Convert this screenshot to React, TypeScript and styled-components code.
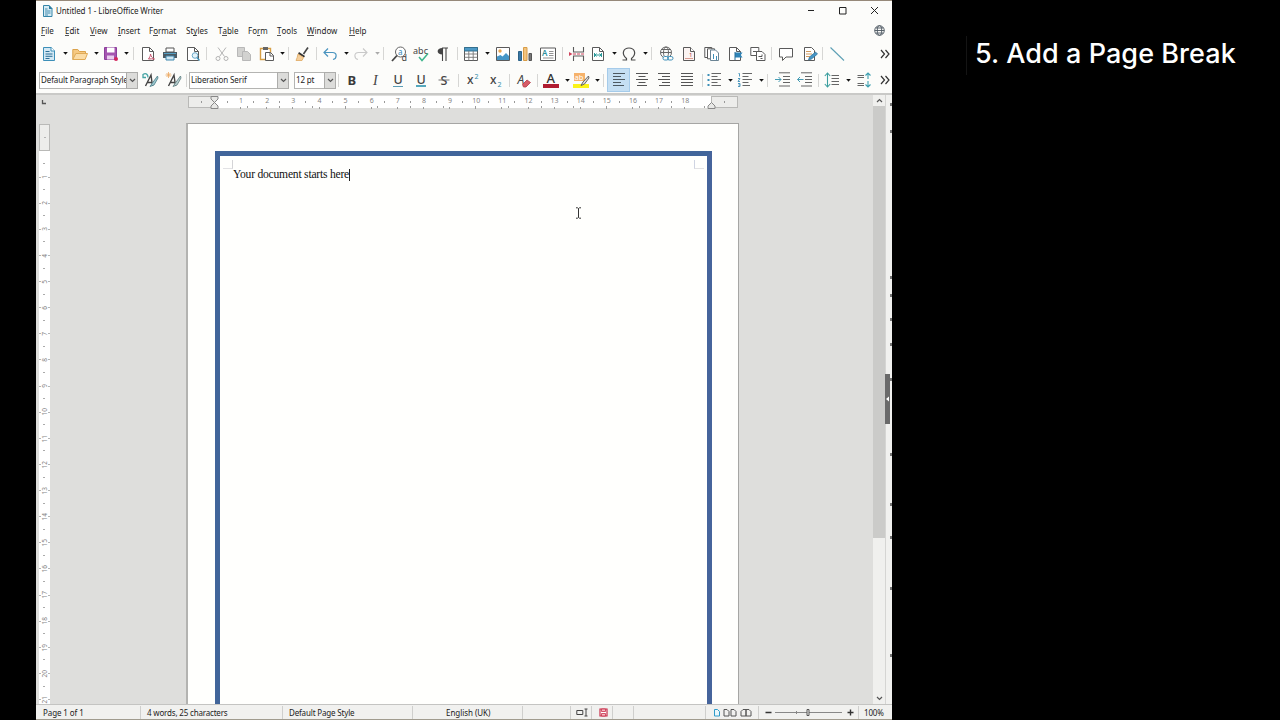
import React from "react";
import styled, { createGlobalStyle } from "styled-components";

const ui = `"Noto Sans", "Open Sans", sans-serif`;

const Global = createGlobalStyle`
  * { box-sizing: border-box; }
  body { margin: 0; background: #000; overflow: hidden; }
  svg { overflow: visible; display: block; flex: none; }
`;
const Screen = styled.div`
  display: flex;
  width: 1280px;
  height: 720px;
  background: #000;
  padding-left: 36px;
`;
const Win = styled.div`
  position: relative;
  display: flex;
  flex-direction: column;
  width: 856px;
  height: 720px;
  background: #fcfcfa;
  border-top: 1px solid #96897a;
  border-bottom: 1px solid #a09b8e;
  font-family: ${ui};
  color: #1c1c1c;
`;
const TitleBar = styled.header`
  display: flex;
  align-items: center;
  height: 19px;
  padding-left: 6px;
`;
const Label = styled.span<{ $w?: number; $ls?: number }>`
  display: block;
  flex: none;
  width: ${(p) => (p.$w ? `${p.$w}px` : "auto")};
  font-size: 8px;
  line-height: 12px;
  letter-spacing: ${(p) => p.$ls ?? -0.14}px;
  white-space: nowrap;
`;
const TitleText = styled(Label)`
  margin-left: 3px;
  flex: 1;
`;
const Controls = styled.div`
  display: flex;
  gap: 21px;
  margin-right: 12px;
`;
const MenuBar = styled.nav`
  display: flex;
  align-items: center;
  height: 21px;
  padding: 0 7px 0 5px;
`;
const MenuSpacer = styled.div`
  flex: 1;
`;
const Mnemonic = styled.span`
  border-bottom: 1px solid #555;
  display: inline-block;
  height: 10px;
  line-height: 10px;
`;
const Bar = styled.div<{ $raise?: number }>`
  display: flex;
  align-items: center;
  height: 26px;
  padding-bottom: ${(p) => p.$raise ?? 0}px;
  flex: none;
`;
const Slot = styled.div<{ $gap: number; $w: number }>`
  display: flex;
  align-items: center;
  justify-content: center;
  flex: none;
  width: ${(p) => p.$w}px;
  height: 16px;
  margin-left: ${(p) => p.$gap}px;
`;
const Active = styled(Slot)`
  height: 24px;
  background: #c5dff3;
  border: 1px solid #a5cbea;
`;
const Divider = styled.div<{ $gap: number }>`
  flex: none;
  width: 1px;
  height: 13px;
  margin-left: ${(p) => p.$gap}px;
  background: #d6d6d4;
`;
const Combo = styled.div<{ $gap: number; $w: number }>`
  display: flex;
  flex: none;
  align-items: center;
  width: ${(p) => p.$w}px;
  height: 17px;
  margin-left: ${(p) => p.$gap}px;
  border: 1px solid #b4b4b2;
  background: #fff;
  padding-left: 1px;
`;
const ComboText = styled(Label)`
  flex: 1;
  min-width: 0;
`;
const ComboButton = styled.div`
  display: flex;
  align-items: center;
  justify-content: center;
  flex: none;
  width: 12px;
  height: 17px;
  margin-right: -1px;
  background: #dcdcda;
  border: 1px solid #adadab;
`;
const Workspace = styled.main`
  display: flex;
  flex: 1;
  min-height: 0;
  background: #dededc;
  border-top: 2px solid #c9c9c7;
`;
const RulerColumn = styled.div`
  display: flex;
  flex-direction: column;
  width: 14px;
  padding-left: 3px;
  flex: none;
`;
const TabCorner = styled.div`
  height: 29px;
  padding: 4px 0 0 2px;
  flex: none;
`;
const VMargin = styled.div`
  height: 27px;
  width: 11px;
  flex: none;
  background: #ededeb;
  border: 1px solid #b9b9b7;
  display: flex;
  align-items: center;
  justify-content: center;
`;
const VScale = styled.div`
  flex: 1;
  min-height: 0;
  overflow: hidden;
  width: 11px;
  background: #fff;
  padding-top: 13px;
`;
const VCell = styled.div`
  display: flex;
  align-items: center;
  justify-content: space-between;
  height: 26.14px;
  position: relative;
  &::before {
    content: "";
    position: absolute;
    top: -1px;
    left: 4px;
    width: 2px;
    height: 1px;
    background: #aaa;
  }
`;
const VNumber = styled.span`
  width: 7px;
  font-size: 6.5px;
  line-height: 7px;
  color: #858585;
  writing-mode: vertical-rl;
  transform: rotate(180deg);
  display: flex;
  justify-content: center;
`;
const EdgeTick = styled.i`
  width: 2px;
  height: 1px;
  background: #b4b4b4;
`;
const Centre = styled.div`
  display: flex;
  flex-direction: column;
  flex: 1;
  padding-left: 138px;
  min-width: 0;
`;
const HRuler = styled.div`
  display: flex;
  width: 550px;
  height: 12px;
  margin: 1px 0 0 0;
  flex: none;
`;
const HMargin = styled.div<{ $w: number }>`
  width: ${(p) => p.$w}px;
  height: 12px;
  flex: none;
  border: 1px solid #b9b9b7;
  background: #ededeb;
  display: flex;
  align-items: center;
  justify-content: center;
`;
const Dot = styled.i`
  width: 1px;
  height: 2px;
  background: #999;
`;
const HScale = styled.div`
  flex: 1;
  min-width: 0;
  background: #fff;
  display: flex;
  padding-left: 13px;
  position: relative;
`;
const HCell = styled.div`
  width: 26.14px;
  flex: none;
  display: flex;
  flex-direction: column;
  align-items: center;
  font-size: 7px;
  line-height: 10px;
  color: #858585;
  position: relative;
  &::before {
    content: "";
    position: absolute;
    left: -1px;
    top: 5px;
    width: 1px;
    height: 2px;
    background: #999;
  }
`;
const TabTicks = styled.div`
  position: absolute;
  left: 0;
  right: 0;
  bottom: 0;
  height: 2px;
  overflow: hidden;
  display: flex;
`;
const TabTick = styled.i<{ $step: number }>`
  flex: none;
  width: ${(p) => p.$step}px;
  border-right: 1px solid #9c9c9c;
`;
const TickRow = styled(TabTicks)`
  bottom: -1px;
`;
const IndentMark = styled.div<{ $x: number }>`
  position: absolute;
  left: ${(p) => p.$x}px;
  top: 0;
  display: flex;
`;
const Page = styled.article`
  width: 553px;
  margin: 15px 0 0 -2px;
  flex: 1;
  min-height: 0;
  overflow: hidden;
  background: #fffffd;
  border: 1px solid #a6a6a4;
  border-left: 2px solid #b3b3b1;
  border-bottom: 0;
  padding: 27px 26px 0 27px;
`;
const Frame = styled.div`
  height: 700px;
  border: 5px solid #41659a;
  border-right-color: #46649b;
  padding: 4px 3px 0 3px;
`;
const Crops = styled.div`
  display: flex;
  justify-content: space-between;
`;
const Crop = styled.i<{ $right?: boolean }>`
  width: 10px;
  height: 9px;
  border-bottom: 1px solid #e2e2e4;
  ${(p) => (p.$right ? "border-left: 1px solid #cfd4e2;" : "border-right: 1px solid #d4d4d6;")}
`;
const Paragraph = styled.p`
  margin: -1px 0 0;
  padding-left: 10px;
  display: flex;
  align-items: center;
  font: 11.6px/14px "Liberation Serif", serif;
  letter-spacing: -0.22px;
  color: #111;
  white-space: nowrap;
`;
const Caret = styled.i`
  width: 1px;
  height: 12px;
  background: #222;
`;
const ScrollBar = styled.div`
  width: 13px;
  flex: none;
  display: flex;
  flex-direction: column;
  background: #f0f0ee;
  border-right: 1px solid #d5d5d3;
`;
const ScrollButton = styled.div`
  height: 11px;
  flex: none;
  display: flex;
  align-items: center;
  justify-content: center;
`;
const Thumb = styled.div`
  height: 432px;
  flex: none;
  background: #cbcbc9;
`;
const Track = styled.div`
  flex: 1;
`;
const SideStrip = styled.aside`
  width: 6px;
  flex: none;
  background: #f1f1ef;
  padding-top: 279px;
`;
const SideHandle = styled.div`
  width: 5px;
  height: 50px;
  margin-left: -1px;
  background: #6a6a6a;
  display: flex;
  align-items: center;
`;
const Speck = styled.i<{ $y: number }>`
  position: absolute;
  left: 854px;
  top: ${(p) => p.$y}px;
  width: 2px;
  height: 3px;
  background: #777;
`;
const Pointer = styled.div`
  position: absolute;
  left: 539px;
  top: 206px;
  display: flex;
`;
const Status = styled.footer`
  display: flex;
  align-items: center;
  height: 15px;
  flex: none;
  background: #f1f1ef;
  border-top: 1px solid #c4c4c2;
`;
const Cell = styled.div<{ $w?: number; $pad?: number }>`
  display: flex;
  align-items: center;
  flex: none;
  height: 13px;
  width: ${(p) => (p.$w ? `${p.$w}px` : "auto")};
  padding: 1px 0 0 ${(p) => p.$pad ?? 0}px;
  border-right: 1px solid #cfcfcd;
`;
const LastCell = styled(Cell)`
  border-right: 0;
`;
const Caption = styled.section`
  flex: 1;
  padding: 36px 0 0 74px;
`;
const CaptionText = styled.h1`
  margin: 0;
  height: 39px;
  padding-left: 8px;
  border-left: 1px solid #141414;
  font: 500 27px/36px Inter, sans-serif;
  letter-spacing: 0.06px;
  color: #fff;
  white-space: nowrap;
`;

const G = "#5a5a5a";
const B = "#3d8fb8";
const T = "#45a5a5";

const doc = "M2.5 1.5h7l4 4v9h-11z";
const icons: Record<string, React.ReactNode> = {
  newdoc: (<><path d="M2.5 1.5h8l3 3v10h-11z" fill="#d3e8f4" stroke={B} /><path d="M10 1v4h4" fill="#fff" stroke={B} /><path d="M4.5 5.5h4M4.5 8h7M4.5 10.3h7M4.5 12.5h4" stroke="#2b6f96" /></>),
  open: (<><path d="M.8 13.5v-10h5l1.5 2h6.2v2.5" fill="#f6c982" stroke="#dba24b" /><path d="M.8 13.5l3-6h11.7l-2.4 6z" fill="#fbdca6" stroke="#e0ab58" /></>),
  save: (<><path d="M1.5 1.5h12v12h-12z" fill="#a455b0" stroke="#8c3f9b" /><path d="M4 1.5h7.500v5H4z" fill="#fff" /><path d="M4 9.500h7v4H4z" fill="#e9cdee" /><circle cx="13" cy="13" r="2" fill="#d3265b" /></>),
  pdf: (<><path d={doc} fill="#fff" stroke={G} /><path d="M9.500 1.500v4h4" fill="none" stroke={G} /><path d="M8.500 13c1-1.500 2-3 2-5 .5 2.500 1.500 4 4 5-2-.2-4-.2-6 0z" stroke="#c4536c" fill="#fff" /></>),
  print: (<><path d="M4 2h8v4H4z" fill="#fff" stroke="#555" /><path d="M1 6h14v6H1z" fill="#4c5a63" /><path d="M2 7h12v1H2z" fill="#56a0c4" /><path d="M4 10h8v4H4z" fill="#cfe6f3" stroke="#3e87ad" /></>),
  preview: (<><path d={doc} fill="#fff" stroke={G} /><path d="M9.500 1.500v4h4" fill="none" stroke={G} /><circle cx="10" cy="9.500" r="2.800" fill="#e4f3fa" stroke="#6aa9c8" /><path d="M12 11.500l2.500 3" stroke={B} strokeWidth="1.300" /></>),
  cut: (<g stroke="#b4b4b4" fill="none"><path d="M4 1.500l6.500 9M12 1.500l-6.500 9" /><circle cx="4" cy="12.500" r="2" /><circle cx="12" cy="12.500" r="2" /></g>),
  copy: (<g stroke="#b8b8b8" fill="#d2d2d0"><path d="M1.500 1.500h7v9h-7z" /><path d="M6.500 5.500h5l3 3v6h-8z" /></g>),
  paste: (<><path d="M1.500 2.500h10v11h-10z" fill="#fff" stroke="#d79f45" strokeWidth="1.400" /><path d="M4 1h5v3H4z" fill="#666" /><path d="M6.500 6.500h5l3 3v5h-8z" fill="#fff" stroke={G} /><path d="M11 6.500v3.500h3.500" fill="none" stroke={G} /></>),
  brush: (<><path d="M14 1.500L9.500 8" stroke="#444" strokeWidth="1.600" /><path d="M5 6l6 4-1 1.500L4 8z" fill="#333" /><path d="M4 8l5.500 3.500-1.500 3H2c1-2 1.500-4 2-6.500z" fill="#f5cf9b" stroke="#e0a860" strokeWidth=".8" /></>),
  undo: (<path d="M6 2.500L2 6.500l4 4M2 6.500h8.500c5 0 4.500 6 .5 7" fill="none" stroke="#4a94bf" strokeWidth="1.200" />),
  redo: (<path d="M10 2.500l4 4-4 4M14 6.500H5.500c-5 0-4.500 6-.5 7" fill="none" stroke="#c9c9c9" strokeWidth="1.100" />),
  find: (<><circle cx="9.500" cy="6" r="5" fill="#fff" stroke="#666" /><path d="M6 9.500L1 15" stroke="#444" strokeWidth="1.800" /><text x="7" y="8.500" fontSize="8" fill="#2f86b5" fontFamily="Noto Sans">a</text><text x="10.500" y="15" fontSize="9" fill="#444" fontFamily="Noto Sans">d</text></>),
  spell: (<><text x="0" y="8" fontSize="9" fill="#444" fontFamily="Noto Sans" textLength="15">abc</text><path d="M6 11l3 3.500 6-7" fill="none" stroke="#3fb58d" strokeWidth="1.500" /></>),
  pilcrow: (<><path d="M7.500 2v6.500C1 8.500 1 2 7.500 2z" fill="#444" /><path d="M13 2H7.500v13M11 2v13" fill="none" stroke="#444" strokeWidth="1.100" /></>),
  table: (<><path d="M1.500 1.500h13v13h-13z" fill="#fff" stroke={G} /><path d="M1.500 1.500h13v3.500h-13z" fill="#4e9ac6" stroke="#34708f" /><path d="M1.500 8h13M1.500 11.300h13M5.800 5v9.500M10.200 5v9.500" stroke="#777" strokeWidth=".9" /></>),
  image: (<><path d="M1.500 1.500h13v13h-13z" fill="#fff" stroke={G} /><circle cx="5" cy="5" r="1.700" fill="#eba64d" /><path d="M2 14v-3.500l3.500-1.500 2 1.500L11 7l3 3v4z" fill="#4696c6" /></>),
  chart: (<><path d="M1.500 5.500h3v9h-3z" fill="#3978a5" stroke="#2d6388" /><path d="M6.500 1.500h3.500v13H6.500z" fill="#f2c480" stroke="#d99d46" /><path d="M12 7.500h2.500v7H12z" fill="#777" stroke="#555" /></>),
  textbox: (<><path d="M.5 2h15v12.500H.5z" fill="#fff" stroke={G} /><text x="2" y="10" fontSize="8" fill="#2c8f9c" fontFamily="Noto Sans" fontWeight="600">A</text><path d="M9 5.500h4.500M9 7.500h4.500M9 9.500h4.500M3 12h10.500" stroke="#888" strokeWidth=".9" /></>),
  pagebreak: (<><path d="M4.500 1v5h10V1M4.500 15v-5h10v5" fill="none" stroke={G} strokeWidth="1.100" /><path d="M4 8h11" stroke="#d0435c" strokeDasharray="3 1" /><path d="M0 6l3.500 2L0 10z" fill="#d0435c" /></>),
  field: (<><path d={doc} fill="#fff" stroke={G} /><path d="M9.500 1.500v4h4" fill="none" stroke={G} /><path d="M4.500 7v4M11.500 7v4M4.500 9h7M6.500 7.500L5 9l1.500 1.500M9.500 7.500L11 9l-1.500 1.500" fill="none" stroke="#2d9b9b" /></>),
  omega: (<path d="M1.500 14h4v-1.500C-.5 7 3 2 8 2s8.500 5 2.500 10.500V14h4" fill="none" stroke="#4b4b4b" strokeWidth="1.200" />),
  link: (<><g fill="none" stroke="#666"><circle cx="8" cy="6.500" r="5.500" /><ellipse cx="8" cy="6.500" rx="2.500" ry="5.500" /><path d="M2.500 6.500h11M3.500 3.500h9" /></g><path d="M5 10h11v5H5z" fill="#fcfcfa" /><rect x="5" y="10.500" width="5.500" height="3.500" rx="1.700" fill="none" stroke={B} /><rect x="9.500" y="10.500" width="5.500" height="3.500" rx="1.700" fill="none" stroke={B} /></>),
  footnote: (<><path d={doc} fill="#fbf4f2" stroke={G} /><path d="M9.500 1.500v4h4" fill="#fff" stroke={G} /><path d="M4 12.500h8" stroke="#d99b92" /><text x="8" y="11" fontSize="6" fill="#b23b3b" fontFamily="Noto Sans">1</text></>),
  endnote: (<g fill="#fff" stroke={G}><path d="M.8 1.500h7v10h-7z" /><path d="M3.500 2.800h7v10h-7z" /><path d="M6.500 4h5l3 3v7.500h-8z" stroke="#6b8494" /><path d="M9.500 8v5M12.500 10v4" stroke={B} /></g>),
  bookmark: (<><path d={doc} fill="#fff" stroke={G} /><path d="M9.500 1.500v4h4" fill="none" stroke={G} /><path d="M8 6.500h7.500L13.800 9l1.700 2.500H8z" fill="#2f84b8" /><path d="M8 6v8" stroke="#276c97" /></>),
  crossref: (<><path d="M.8 1.500h8v8h-8z" fill="#fff" stroke={G} /><path d="M3 5.500h6" stroke={G} /><path d="M6.500 5.500h5.500l3 3v6H6.500z" fill="#fff" stroke={G} /><path d="M8.500 10.500h3.500v-2M10.500 12.500h2" stroke="#555" fill="none" /></>),
  comment: (<path d="M1.500 2.500h13v8.500H8l-3.500 3.500V11h-3z" fill="#fff" stroke={G} />),
  track: (<><path d="M2.500 1.500h7l3 3v10h-10z" fill="#fff" stroke={G} /><path d="M4 5.500h5M4 8h6M4 10.500h4" stroke="#d29b5c" /><path d="M6.500 14l1-3 6-5 2 2-6 5z" fill="#4696c6" stroke="#2d6d94" strokeWidth=".7" /></>),
  line: (<path d="M1.500 1.500l13.500 13" stroke="#5d9fb4" strokeWidth="1.100" />),
  more: (<path d="M1 4l3.500 4L1 12M5.500 4L9 8l-3.500 4" fill="none" stroke="#333" strokeWidth="1.200" />),
  styleUpd: (<><path d="M3.500 14L9 3l1.500 11M5.500 10.500h5" fill="none" stroke="#444" strokeWidth="1.400" /><path d="M1 2.500c3-2 5 0 5 3M1 2v3.500h3" fill="none" stroke={T} strokeWidth="1.300" /><path d="M15.500 4L10 11.500l-2 3 4-1.500 4-7z" fill="#9cc8cf" stroke="#4a7c86" strokeWidth=".8" /></>),
  styleNew: (<><path d="M3.500 14L9 3l1.500 11M5.500 10.500h5" fill="none" stroke="#444" strokeWidth="1.400" /><path d="M3.500 0v6M.5 3h6M1.500 1l4 4M5.500 1l-4 4" stroke="#eba75f" strokeWidth=".8" /><path d="M15.500 4L10 11.500l-2 3 4-1.500 4-7z" fill="#b9cfcf" stroke="#5c7c80" strokeWidth=".8" /></>),
  bold: (<text x="3.500" y="13" fontSize="13" fontWeight="700" fill="#3a3a3a" fontFamily="Noto Sans">B</text>),
  italic: (<text x="5" y="13" fontSize="14" fontStyle="italic" fill="#444" fontFamily="Liberation Serif">I</text>),
  under: (<><text x="3.500" y="12" fontSize="12.500" fontWeight="500" fill="#444" fontFamily="Noto Sans">U</text><path d="M3 14.500h10" stroke="#5a9cb5" /></>),
  dunder: (<><text x="3.500" y="12" fontSize="12.500" fontWeight="500" fill="#444" fontFamily="Noto Sans">U</text><path d="M3 14h10" stroke="#55a8bd" strokeWidth="2" /></>),
  strike: (<><text x="4.500" y="12.500" fontSize="12.500" fontWeight="500" fill="#444" fontFamily="Noto Sans">S</text><path d="M2.500 8h11" stroke="#777" /></>),
  sup: (<><text x="2" y="12" fontSize="12" fontWeight="500" fill="#444" fontFamily="Noto Sans">x</text><text x="9.500" y="7" fontSize="7" fill="#2f8aa8" fontFamily="Noto Sans">2</text></>),
  sub: (<><text x="2" y="12" fontSize="12" fontWeight="500" fill="#444" fontFamily="Noto Sans">x</text><text x="9.500" y="14.500" fontSize="7" fill="#2f8aa8" fontFamily="Noto Sans">2</text></>),
  clear: (<><text x="1.500" y="12" fontSize="12" fontStyle="italic" fill="#444" fontFamily="Noto Sans">A</text><path d="M6.500 12.500l4.500-4.500 3.500 2.500-4.500 4.500h-2.500z" fill="#d65b66" stroke="#b53a48" strokeWidth=".8" /></>),
  color: (<><text x="3.500" y="11" fontSize="13" fontWeight="500" fill="#333" fontFamily="Noto Sans">A</text><path d="M0 12h16v4H0z" fill="#b01c31" /></>),
  hilite: (<><path d="M1 1h11v8H1z" fill="#f6b26b" /><text x="1.500" y="7.500" fontSize="7.500" fill="#fff" fontFamily="Noto Sans">ab</text><path d="M0 12h16v4H0z" fill="#fbf318" /><path d="M15.500 4L10 10l-2 3.500 3.500-1.500L16 6z" fill="#ddd" stroke="#555" strokeWidth=".9" /></>),
  left: (<path d="M2 1.500h12M2 4.500h8M2 7.500h12M2 10.500h8M2 13.500h11" stroke="#4d5961" />),
  center: (<path d="M2 1.500h12M4.500 4.500h7M2 7.500h12M4.500 10.500h7M3 13.500h10" stroke="#555" />),
  right: (<path d="M2 1.500h12M6 4.500h8M2 7.500h12M6 10.500h8M3 13.500h11" stroke="#555" />),
  justify: (<path d="M2 1.500h12M2 4.500h12M2 7.500h12M2 10.500h12M2 13.500h12" stroke="#555" />),
  bullets: (<><path d="M5.500 1.500H15M5.500 4.500h6M5.500 7.500H15M5.500 10.500h6M5.500 13.500H15" stroke="#666" /><path d="M1.500 2h2v2h-2zM1.500 7h2v2h-2zM1.500 12h2v2h-2z" fill={B} /></>),
  numbers: (<><path d="M5.500 1.500H15M5.500 4.500h6M5.500 7.500H15M5.500 10.500h6M5.500 13.500H13" stroke="#666" /><path d="M1.500 1.500h1v3M1 6.500h2L1 9.500h2M1 11.500h2v3H1M1.500 13H3" fill="none" stroke={B} strokeWidth=".9" /></>),
  indent: (<><path d="M4 .8h11M8 4.500h7M8 7.500h7M8 10.500h7M4 14h11" stroke="#666" /><path d="M0 7.500h6M3.500 5L6 7.500 3.500 10" fill="none" stroke="#459cb4" /></>),
  outdent: (<><path d="M4 .8h11M8 4.500h7M8 7.500h7M8 10.500h7M4 14h11" stroke="#666" /><path d="M6.500 7.500h-6M3 5L.5 7.500 3 10" fill="none" stroke="#459cb4" /></>),
  spacing: (<><path d="M7.500 3.500H15M7.500 6.500H15M7.500 9.500H15M7.500 12.500H15" stroke="#666" /><path d="M3.500 1v14M.8 4l2.700-3 2.700 3M.8 12l2.700 3 2.700-3" fill="none" stroke="#3c9f9f" strokeWidth="1.100" /></>),
  para: (<><path d="M1.500 3.500h6.500M1.500 5.500h6.500M1.500 11.500h6.500M1.500 13.500h6.500" stroke="#666" /><path d="M12 1v6M9.500 3.500L12 1l2.500 2.500M12 9v6M9.500 12.500L12 15l2.500-2.500" fill="none" stroke="#3c9fb0" strokeWidth="1.100" /></>),
};

const Icon = ({ name, w = 16 }: { name: string; w?: number }) => (
  <svg width={w} height={16} viewBox={`0 0 ${w} 16`} fill="none">{icons[name]}</svg>
);
const Arrow = ({ dim }: { dim?: boolean }) => (
  <svg width="5" height="3" viewBox="0 0 5 3"><path d="M.2 0h4.600L2.500 2.800z" fill={dim ? "#aaa" : "#111"} /></svg>
);
const Chevron = ({ up }: { up?: boolean }) => (
  <svg width="7" height="5" viewBox="0 0 7 5"><path d={up ? "M1 4l2.500-2.500L6 4" : "M1 1l2.500 2.500L6 1"} fill="none" stroke="#555" strokeWidth="1.200" /></svg>
);

type Item = [kind: string, gap: number];
const standard: Item[] = [
  ["newdoc", 5], ["v", 5], ["open", 4], ["v", 5], ["save", 4], ["v", 4], ["|", 4],
  ["pdf", 6], ["print", 6], ["preview", 7], ["|", 5], ["cut", 7], ["copy", 6], ["paste", 7], ["v", 4], ["|", 3],
  ["brush", 5], ["|", 6], ["undo", 5], ["v", 5], ["redo", 4], ["x", 5], ["|", 3],
  ["find", 7], ["spell", 6], ["pilcrow", 6], ["|", 6], ["table", 5], ["v", 5], ["image", 5], ["chart", 6], ["textbox", 7], ["|", 6],
  ["pagebreak", 6], ["field", 5], ["v", 5], ["omega", 4], ["v", 5], ["|", 3],
  ["link", 6], ["footnote", 7], ["endnote", 7], ["bookmark", 7], ["crossref", 7], ["|", 5],
  ["comment", 6], ["track", 8], ["|", 4], ["line", 6], ["more", 35],
];
const styleTools: Item[] = [["styleUpd", 4], ["styleNew", 7], ["|", 5]];
const formatting: Item[] = [
  ["|", 2], ["bold", 5], ["italic", 8], ["under", 6], ["dunder", 7], ["strike", 7], ["|", 6],
  ["sup", 6], ["sub", 7], ["|", 5], ["clear", 6], ["|", 5], ["color", 5], ["v", 5], ["hilite", 3], ["v", 5], ["|", 3],
  ["left", 3], ["center", 4], ["right", 6], ["justify", 7], ["|", 7],
  ["bullets", 3], ["v", 5], ["numbers", 4], ["v", 5], ["|", 3], ["indent", 7], ["outdent", 6], ["|", 5],
  ["spacing", 5], ["v", 5], ["para", 5], ["more", 8],
];
const Tools = ({ items }: { items: Item[] }) => (
  <>
    {items.map(([kind, gap], i) => {
      if (kind === "|") return <Divider key={i} $gap={gap} />;
      if (kind === "v" || kind === "x") return <Slot key={i} $gap={gap} $w={6}><Arrow dim={kind === "x"} /></Slot>;
      if (kind === "left") return <Active key={i} $gap={gap} $w={23}><Icon name="left" /></Active>;
      if (kind === "more") return <Slot key={i} $gap={gap} $w={10}><Icon name="more" w={10} /></Slot>;
      return <Slot key={i} $gap={gap} $w={16}><Icon name={kind} /></Slot>;
    })}
  </>
);

const menus: [string, number, number][] = [
  ["File", 0, 24], ["Edit", 0, 25], ["View", 0, 28], ["Insert", 0, 31], ["Format", 1, 37], ["Styles", 2, 32],
  ["Table", 1, 30], ["Form", 2, 29], ["Tools", 0, 30], ["Window", 0, 42], ["Help", 0, 30],
];
const cm = (n: number) => Array.from({ length: n }, (_, i) => i + 1);
const specks = [102, 129, 275, 293, 317, 342, 377, 452, 502, 535, 586, 653];
const Hourglass = ({ half }: { half?: boolean }) => (
  <svg width="9" height="13" viewBox="0 0 9 13">
    <path d={half ? "M4.500 6.500L8 10v2.500H1V10z" : "M1 .5h7V3L4.500 6.500 8 10v2.500H1V10l3.500-3.500L1 3z"} fill="#e8e8e6" stroke="#888" />
  </svg>
);

export default function App() {
  return (
    <Screen>
      <Global />
      <Win>
        <TitleBar>
          <svg width="11" height="12" viewBox="0 0 11 12"><path d="M1.500.5h5.500l3 3v8h-8.500z" fill="#d5ebf4" stroke="#3585a8" /><path d="M7 0v4h3.500" fill="#2c7da1" /><path d="M3 4h2.500M3 6h5.500M3 8h5.500M3 10h3" stroke="#3585a8" strokeWidth=".9" /></svg>
          <TitleText $ls={-0.09}>Untitled 1 - LibreOffice Writer</TitleText>
          <Controls>
            <svg width="11" height="11" viewBox="0 0 11 11"><path d="M3 5.500h6" stroke="#222" /></svg>
            <svg width="11" height="11" viewBox="0 0 11 11"><path d="M2.500 2.500H9V9H2.500z" fill="none" stroke="#222" /></svg>
            <svg width="11" height="11" viewBox="0 0 11 11"><path d="M2 2l7 7M9 2L2 9" stroke="#222" /></svg>
          </Controls>
        </TitleBar>
        <MenuBar>
          {menus.map(([t, m, w]) => (
            <Label key={t} $w={w} $ls={0}>{t.slice(0, m)}<Mnemonic>{t[m]}</Mnemonic>{t.slice(m + 1)}</Label>
          ))}
          <MenuSpacer />
          <svg width="11" height="11" viewBox="0 0 11 11" fill="none" stroke="#4b5660" strokeWidth=".9"><circle cx="5.500" cy="5.500" r="4.800" /><ellipse cx="5.500" cy="5.500" rx="2.200" ry="4.800" /><path d="M.7 5.500h9.600M1.500 3h8M1.500 8h8" /></svg>
        </MenuBar>
        <Bar $raise={1}><Tools items={standard} /></Bar>
        <Bar>
          <Combo $gap={3} $w={99}><ComboText $ls={-0.09}>Default Paragraph Style</ComboText><ComboButton><Chevron /></ComboButton></Combo>
          <Tools items={styleTools} />
          <Combo $gap={2} $w={100}><ComboText $ls={-0.1}>Liberation Serif</ComboText><ComboButton><Chevron /></ComboButton></Combo>
          <Combo $gap={5} $w={42}><ComboText>12 pt</ComboText><ComboButton><Chevron /></ComboButton></Combo>
          <Tools items={formatting} />
        </Bar>
        <Workspace>
          <RulerColumn>
            <TabCorner><svg width="6" height="6" viewBox="0 0 6 6"><path d="M1.500 1v3.500H5" fill="none" stroke="#555" strokeWidth="1.300" /></svg></TabCorner>
            <VMargin><EdgeTick /></VMargin>
            <VScale>
              {cm(21).map((n) => <VCell key={n}><EdgeTick /><VNumber>{n}</VNumber><EdgeTick /></VCell>)}
            </VScale>
          </RulerColumn>
          <Centre>
            <HRuler>
              <HMargin $w={27}><Dot /></HMargin>
              <HScale>
                {cm(18).map((n) => <HCell key={n}>{n}</HCell>)}
                <TabTicks>{cm(15).map((n) => <TabTick key={n} $step={32.68} />)}</TabTicks>
                <TickRow>{cm(18).map((n) => <TabTick key={n} $step={26.14} />)}</TickRow>
                <IndentMark $x={-5}><Hourglass /></IndentMark>
                <IndentMark $x={492}><Hourglass half /></IndentMark>
              </HScale>
              <HMargin $w={27}><Dot /></HMargin>
            </HRuler>
            <Page>
              <Frame>
                <Crops><Crop /><Crop $right /></Crops>
                <Paragraph>Your document starts here<Caret /></Paragraph>
              </Frame>
            </Page>
          </Centre>
          <ScrollBar>
            <ScrollButton><Chevron up /></ScrollButton>
            <Thumb />
            <Track />
            <ScrollButton><Chevron /></ScrollButton>
          </ScrollBar>
          <SideStrip>
            <SideHandle><svg width="4" height="6" viewBox="0 0 4 6"><path d="M4 .5v5L1 3z" fill="#fff" /></svg></SideHandle>
          </SideStrip>
        </Workspace>
        <Status>
          <Cell $w={105} $pad={7}><Label $ls={-0.1}>Page 1 of 1</Label></Cell>
          <Cell $w={142} $pad={6}><Label $ls={-0.18}>4 words, 25 characters</Label></Cell>
          <Cell $w={130} $pad={6}><Label $ls={-0.16}>Default Page Style</Label></Cell>
          <Cell $w={110} $pad={33}><Label $ls={-0.05}>English (UK)</Label></Cell>
          <Cell $w={48} />
          <Cell $w={21} $pad={5}><svg width="13" height="9" viewBox="0 0 13 9" fill="none" stroke="#444"><path d="M.8 2.500h6v4h-6zM8.500 1h3M8.500 8h3M10 1v7" /></svg></Cell>
          <Cell $w={21} $pad={7}><svg width="9" height="9" viewBox="0 0 9 9"><path d="M1 1h7v7H1z" fill="#fff" stroke="#c92d49" strokeWidth="1.200" /><path d="M2.500 1h4v2.500h-4zM2.500 5.500h4V8h-4z" fill="#f3b9c2" stroke="#c92d49" strokeWidth=".8" /></svg></Cell>
          <Cell $w={21} />
          <Cell $w={72} />
          <Cell $w={53} $pad={7}>
            <svg width="40" height="9" viewBox="0 0 40 9" fill="none" stroke="#555"><path d="M1.500 1.500h3l2 2V8h-5z" stroke="#2f9bc9" fill="#eaf6fb" /><path d="M11 1.500h3l2 2V8h-5zM18 1.500h3l2 2V8h-5zM28 8V3.500l2-2h3V8zM33 8V1.500h3l2 2V8z" /></svg>
          </Cell>
          <Cell $w={100} $pad={6}>
            <svg width="90" height="9" viewBox="0 0 90 9"><path d="M.5 4.500h6M82.500 4.500h6M85.500 1.500v6" stroke="#333" strokeWidth="1.400" /><path d="M10 4.500h67M31.500 3v3" stroke="#888" /><path d="M42 1.500h2v6h-2z" fill="#f1f1ef" stroke="#555" /></svg>
          </Cell>
          <LastCell $pad={5}><Label>100%</Label></LastCell>
        </Status>
        {specks.map((y) => <Speck key={y} $y={y} />)}
        <Pointer><svg width="7" height="12" viewBox="0 0 7 12" fill="none" stroke="#333"><path d="M1 .8h1.500l1 .7 1-.7H6M1 11.200h1.500l1-.7 1 .7H6M3.500 1.500v9" /></svg></Pointer>
      </Win>
      <Caption><CaptionText>5. Add a Page Break</CaptionText></Caption>
    </Screen>
  );
}
